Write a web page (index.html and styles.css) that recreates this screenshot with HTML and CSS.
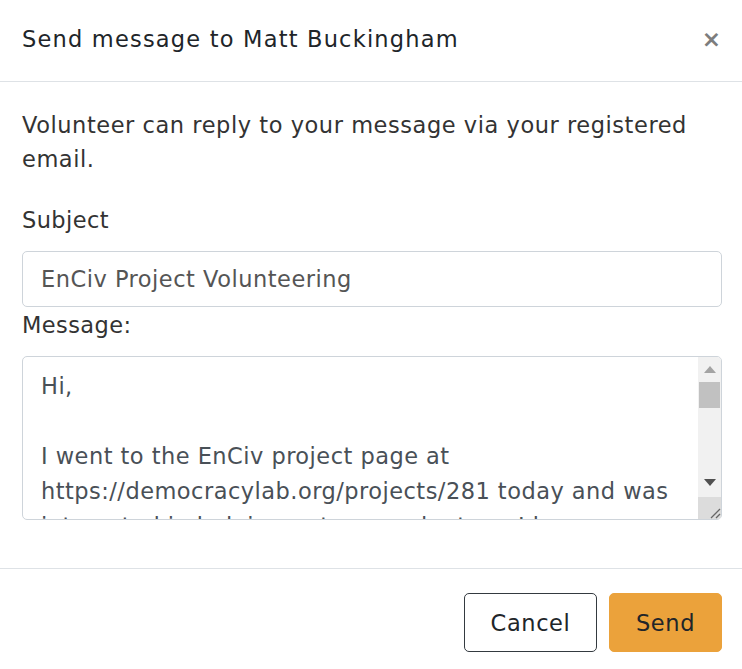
FILE: index.html
```html
<!DOCTYPE html>
<html lang="en">
<head>
<meta charset="utf-8">
<title>Send message</title>
<link rel="stylesheet" href="styles.css">
</head>
<body>
<div class="modal">
  <div class="modal-header">
    <h1 class="modal-title">Send message to Matt Buckingham</h1>
    <span class="close">&times;</span>
  </div>
  <div class="modal-body">
    <p class="intro">Volunteer can reply to your message via your registered email.</p>
    <label class="label label-subject">Subject</label>
    <div class="input">EnCiv Project Volunteering</div>
    <label class="label label-message">Message:</label>
    <div class="textarea">
      <div class="textarea-content">
        <div class="line">Hi,</div>
        <div class="line">&nbsp;</div>
        <div class="line">I went to the EnCiv project page at</div>
        <div class="line">https://democracylab.org/projects/281 today and was</div>
        <div class="line">interested in helping out as a volunteer. I have</div>
      </div>
      <div class="scrollbar">
        <div class="sb-track">
          <span class="sb-up"></span>
          <span class="sb-thumb"></span>
          <span class="sb-spacer"></span>
          <span class="sb-down"></span>
        </div>
        <div class="sb-corner">
          <svg width="12" height="12" viewBox="0 0 12 12"><path d="M2 11 L11 2 M7 11 L11 7" stroke="#666" stroke-width="1.3" fill="none"/></svg>
        </div>
      </div>
    </div>
  </div>
  <div class="modal-footer">
    <button class="btn btn-cancel">Cancel</button>
    <button class="btn btn-send">Send</button>
  </div>
</div>
</body>
</html>
```
FILE: styles.css
```css
html, body {
  margin: 0;
  padding: 0;
  background: #ffffff;
}
.modal {
  width: 742px;
  font-family: "DejaVu Sans", sans-serif;
  color: #212529;
}
.modal-header {
  height: 82px;
  box-sizing: border-box;
  border-bottom: 1px solid #dee2e6;
  display: flex;
  align-items: center;
  justify-content: space-between;
  padding: 0 22px 3px 22px;
}
.modal-title {
  margin: 0;
  font-family: "DejaVu Sans", sans-serif;
  font-weight: 400;
  font-size: 22.5px;
  letter-spacing: 1.2px;
  color: #212529;
}
.close {
  font-family: "DejaVu Sans", sans-serif;
  font-weight: 700;
  font-size: 23px;
  color: #7d7d7d;
  margin-right: -1px;
}
.modal-body {
  padding: 26px 20px 0 22px;
  height: 487px;
  box-sizing: border-box;
  border-bottom: 1px solid #dee2e6;
}
.intro {
  margin: 0;
  font-size: 22.5px;
  letter-spacing: 0.55px;
  line-height: 34px;
  color: #333333;
}
.label {
  display: block;
  font-size: 22.5px;
  letter-spacing: 0.4px;
  line-height: 34px;
  color: #333333;
}
.label-subject {
  margin-top: 27px;
  margin-bottom: 14px;
}
.label-message {
  margin-top: 1px;
  margin-bottom: 14px;
}
.input {
  height: 56px;
  box-sizing: border-box;
  border: 1px solid #ced4da;
  border-radius: 5px;
  padding: 0 18px;
  display: flex;
  align-items: center;
  font-size: 22.5px;
  letter-spacing: 0.5px;
  color: #555555;
}
.textarea {
  height: 164px;
  box-sizing: border-box;
  border: 1px solid #ced4da;
  border-radius: 5px;
  display: flex;
  overflow: hidden;
}
.textarea-content {
  flex: 1;
  padding: 12px 18px 0 18px;
  overflow: hidden;
  font-size: 22.5px;
  letter-spacing: 0.47px;
  line-height: 35px;
  color: #495057;
  white-space: nowrap;
}
.scrollbar {
  width: 23px;
  display: flex;
  flex-direction: column;
  background: #f1f1f1;
}
.sb-track {
  flex: 1;
  display: flex;
  flex-direction: column;
  align-items: center;
}
.sb-up {
  margin-top: 9px;
  width: 0;
  height: 0;
  border-left: 6px solid transparent;
  border-right: 6px solid transparent;
  border-bottom: 7px solid #a3a3a3;
}
.sb-thumb {
  margin-top: 9px;
  width: 21px;
  height: 26px;
  background: #c1c1c1;
}
.sb-spacer {
  flex: 1;
}
.sb-down {
  margin-bottom: 11px;
  width: 0;
  height: 0;
  border-left: 6px solid transparent;
  border-right: 6px solid transparent;
  border-top: 7px solid #505050;
}
.sb-corner {
  height: 22px;
  background: #dcdcdc;
  display: flex;
  align-items: flex-end;
  justify-content: flex-end;
}
.modal-footer {
  display: flex;
  justify-content: flex-end;
  gap: 12px;
  padding: 24px 20px 0 0;
}
.btn {
  height: 59px;
  box-sizing: border-box;
  border-radius: 5px;
  font-family: "DejaVu Sans", sans-serif;
  font-size: 22.5px;
  letter-spacing: 0.6px;
  color: #212529;
  cursor: pointer;
}
.btn-cancel {
  width: 133px;
  background: #ffffff;
  border: 1px solid #343a40;
}
.btn-send {
  width: 113px;
  background: #eba23b;
  border: 1px solid #eba23b;
}
```
